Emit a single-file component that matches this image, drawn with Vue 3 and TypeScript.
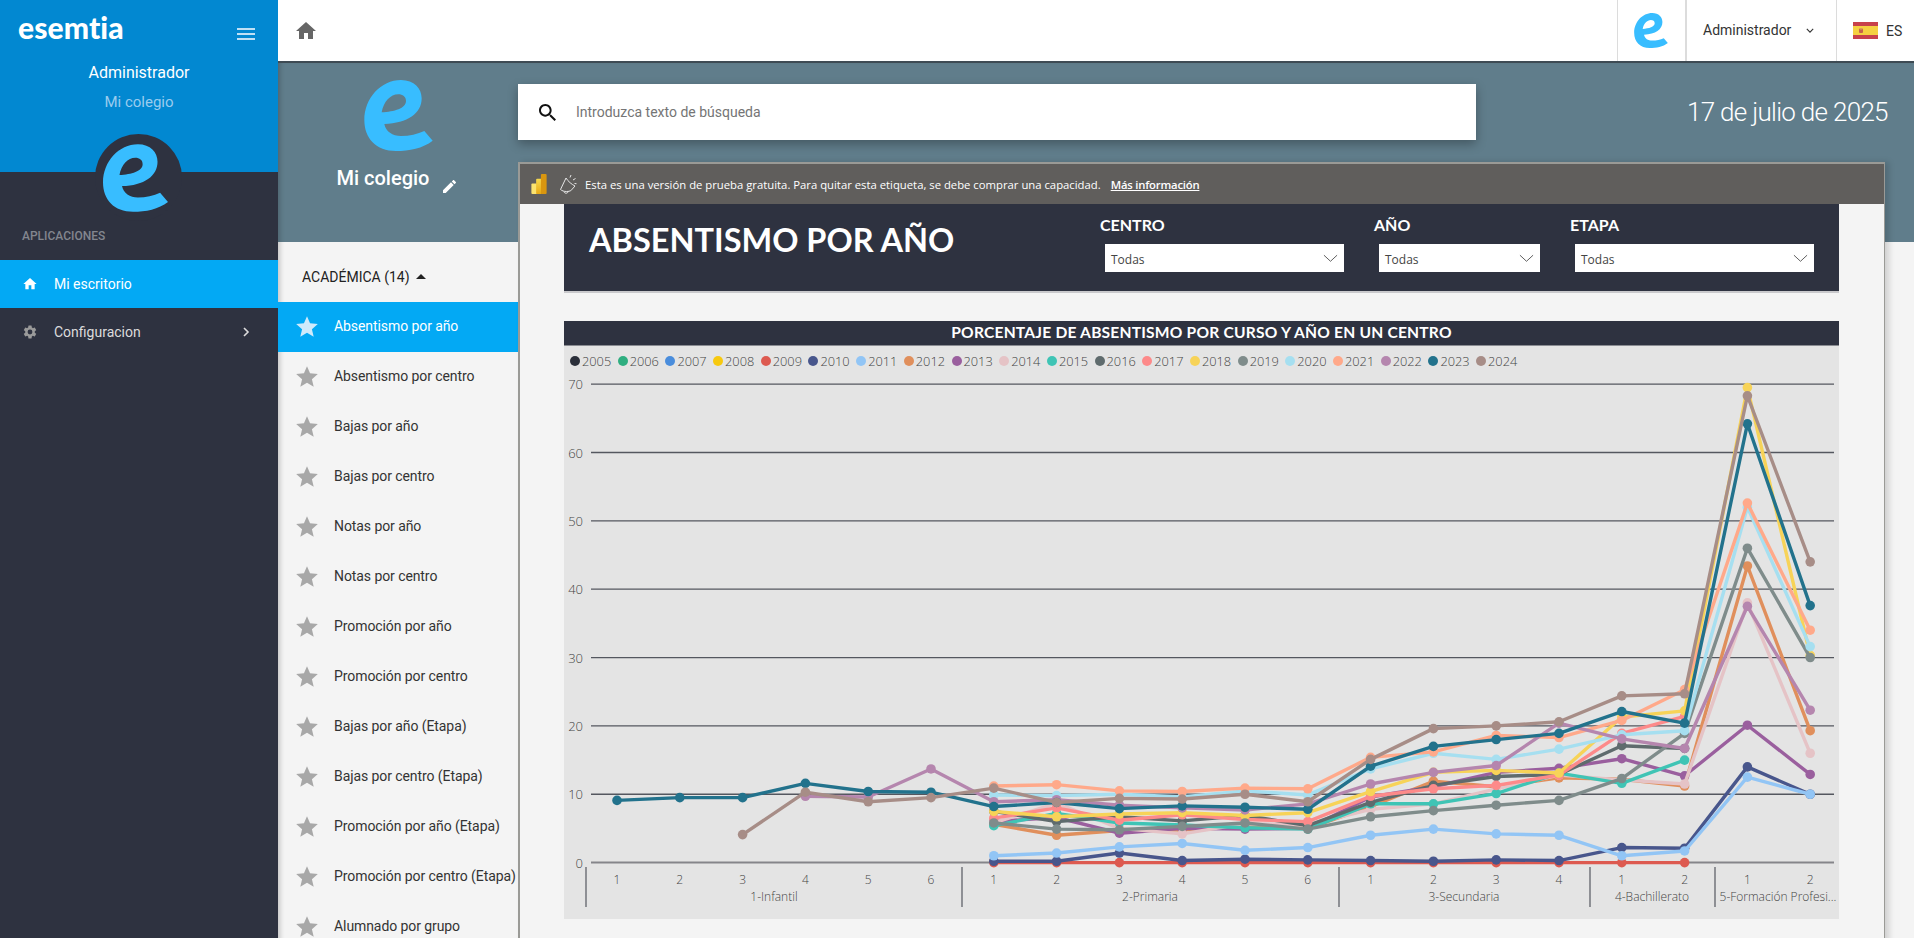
<script setup lang="ts">
const ePath = 'M245 212C215 235 175 243 135 243C75 243 40 205 40 150C40 85 90 30 150 30C190 30 212 55 212 85C212 130 170 160 100 162C104 185 125 198 150 198C175 198 200 192 220 183ZM92 127C130 125 165 115 165 93C165 80 155 73 142 73C118 73 98 95 92 127Z'
const starPath = 'M12 17.27L18.18 21l-1.64-7.03L22 9.24l-7.19-.61L12 2 9.19 8.63 2 9.24l5.46 4.73L5.82 21z'
const homePath = 'M10 20v-6h4v6h5v-8h3L12 3 2 12h3v8z'

const reports = ['Absentismo por año', 'Absentismo por centro', 'Bajas por año', 'Bajas por centro', 'Notas por año', 'Notas por centro', 'Promoción por año', 'Promoción por centro', 'Bajas por año (Etapa)', 'Bajas por centro (Etapa)', 'Promoción por año (Etapa)', 'Promoción por centro (Etapa)', 'Alumnado por grupo']

type V = number | null
const n = null
const series: { year: number; color: string; data: V[] }[] = [
  { year: 2005, color: '#2b2f3a', data: [] },
  { year: 2006, color: '#2fae80', data: [] },
  { year: 2007, color: '#4a8ddc', data: [] },
  { year: 2008, color: '#f7c90f', data: [] },
  { year: 2009, color: '#dd5a50', data: [n, n, n, n, n, n, 0, 0, 0, 0, 0, 0, 0, 0, 0, 0, 0, 0, n, n] },
  { year: 2010, color: '#48568c', data: [n, n, n, n, n, n, 0.2, 0.2, 1.4, 0.3, 0.5, 0.4, 0.3, 0.2, 0.4, 0.3, 2.2, 2.1, 14, 10] },
  { year: 2011, color: '#92c5f5', data: [n, n, n, n, n, n, 1, 1.4, 2.3, 2.8, 1.8, 2.2, 4, 4.9, 4.2, 4, 1, 1.7, 12.5, 10] },
  { year: 2012, color: '#e08f5c', data: [n, n, n, n, n, n, 5.6, 4, 4.7, 4.8, 5.2, 5, 8.2, 11.9, 11.1, 12.4, 12.2, 11.2, 43.4, 19.3] },
  { year: 2013, color: '#9a5f9e', data: [n, n, n, n, n, n, 6, 6.6, 4.3, 5, 4.9, 5, 9.6, 11.1, 13.2, 13.8, 15.2, 12.7, 20.1, 12.9] },
  { year: 2014, color: '#e5c3c6', data: [n, n, n, n, n, n, 5.8, 8.7, 5, 4.2, 5.7, 5.5, 7.8, 8.6, 10.8, 12.8, 12.1, 11.5, 38, 16] },
  { year: 2015, color: '#3fc4b5', data: [n, n, n, n, n, n, 5.4, 7.2, 5.8, 5.5, 5.1, 4.9, 8.6, 8.6, 10.1, 13.1, 11.6, 15, n, n] },
  { year: 2016, color: '#5f6b6d', data: [n, n, n, n, n, n, 7.5, 6, 6.7, 6.1, 6.9, 5.4, 8.8, 11.3, 12.6, 12.9, 17.1, 16.7, n, n] },
  { year: 2017, color: '#fd8a8a', data: [n, n, n, n, n, n, 6.5, 8, 6.2, 7, 6.3, 6, 9.7, 10.8, 11.3, 12.8, 18.9, 21.4, n, n] },
  { year: 2018, color: '#f7d358', data: [n, n, n, n, n, n, 7.5, 6.7, 7.1, 7.3, 6.9, 7.3, 10.4, 13.2, 13.5, 13.1, 21.3, 22.2, 69.5, 30.3] },
  { year: 2019, color: '#7f8c8b', data: [n, n, n, n, n, n, 5.8, 4.9, 4.8, 5.3, 5.8, 4.9, 6.7, 7.6, 8.4, 9.1, 12.3, 18.9, 46, 30] },
  { year: 2020, color: '#a6dff0', data: [n, n, n, n, n, n, 9.9, 9.8, 10, 9.6, 10.5, 9.9, 13.7, 16, 15.1, 16.6, 18.7, 19.3, 52, 31.6] },
  { year: 2021, color: '#ffa98a', data: [n, n, n, n, n, n, 11.2, 11.4, 10.5, 10.4, 10.9, 10.8, 15.4, 16.2, 18.6, 18.3, 20.8, 25.3, 52.6, 34] },
  { year: 2022, color: '#b586ae', data: [n, n, n, 9.7, 9.6, 13.7, 8.9, 9.2, 8.4, 8, 7.7, 8.6, 11.5, 13.2, 14.2, 20.4, 18.1, 16.7, 37.5, 22.3] },
  { year: 2023, color: '#22728c', data: [9.1, 9.5, 9.5, 11.6, 10.4, 10.3, 8.2, 8.8, 7.9, 8.3, 8.1, 7.8, 14.1, 17, 18, 18.9, 22.1, 20.4, 64.2, 37.6] },
  { year: 2024, color: '#a78d87', data: [n, n, 4.1, 10.3, 8.9, 9.5, 10.9, 8.8, 9.4, 9.3, 10, 8.9, 15.1, 19.6, 20, 20.6, 24.4, 24.7, 68.3, 44] },
]

const px = (i: number) => 617 + 62.8 * i
const py = (v: number) => 862.6 - 6.835 * v

const lines = series.map((s) => {
  const pts = s.data
    .map((v, i) => (v === null ? null : { x: px(i), y: py(v) }))
    .filter((p): p is { x: number; y: number } => p !== null)
  return { year: s.year, color: s.color, pts, points: pts.map((p) => `${p.x},${p.y}`).join(' ') }
})

const ticks = [0, 10, 20, 30, 40, 50, 60, 70]
const courses = ['1', '2', '3', '4', '5', '6', '1', '2', '3', '4', '5', '6', '1', '2', '3', '4', '1', '2', '1', '2']
const separators = [586, 962, 1339, 1590, 1715]
const stages = [
  { label: '1-Infantil', x: 774 },
  { label: '2-Primaria', x: 1150 },
  { label: '3-Secundaria', x: 1464 },
  { label: '4-Bachillerato', x: 1652 },
  { label: '5-Formación Profesi...', x: 1778 },
]
const filters = [
  { label: 'CENTRO', cls: 'wide' },
  { label: 'AÑO', cls: 'narrow' },
  { label: 'ETAPA', cls: 'wide' },
]
</script>

<template>
  <div class="app">
    <aside class="sidebar">
      <div class="side-head">
        <div class="brand-row">
          <span class="brand">esemtia</span>
          <span class="burger"><i></i><i></i><i></i></span>
        </div>
        <div class="side-user">Administrador</div>
        <div class="side-school">Mi colegio</div>
        <div class="avatar">
          <svg class="avatar-e" viewBox="40 30 205 213"><path :d="ePath" fill-rule="evenodd" /></svg>
        </div>
      </div>
      <div class="side-label">APLICACIONES</div>
      <a class="side-item active">
        <svg class="side-icon" viewBox="0 0 24 24"><path :d="homePath" /></svg>
        <span>Mi escritorio</span>
      </a>
      <a class="side-item">
        <svg class="side-icon gear" viewBox="0 0 24 24"><path d="M19.14 12.94c.04-.3.06-.61.06-.94s-.02-.64-.07-.94l2.03-1.58a.49.49 0 0 0 .12-.61l-1.92-3.32a.49.49 0 0 0-.59-.22l-2.39.96a7 7 0 0 0-1.62-.94l-.36-2.54a.48.48 0 0 0-.48-.41h-3.84a.48.48 0 0 0-.47.41l-.36 2.54c-.59.24-1.13.57-1.62.94l-2.39-.96a.48.48 0 0 0-.59.22L2.74 8.87a.48.48 0 0 0 .12.61l2.03 1.58c-.05.3-.09.63-.09.94s.02.64.07.94l-2.03 1.58a.49.49 0 0 0-.12.61l1.92 3.32c.12.22.37.29.59.22l2.39-.96c.5.38 1.03.7 1.62.94l.36 2.54c.05.24.24.41.48.41h3.84c.24 0 .44-.17.47-.41l.36-2.54c.59-.24 1.13-.56 1.62-.94l2.39.96c.22.08.47 0 .59-.22l1.92-3.32a.48.48 0 0 0-.12-.61l-2.01-1.58zM12 15.6A3.6 3.6 0 1 1 12 8.4a3.6 3.6 0 0 1 0 7.2z" /></svg>
        <span>Configuracion</span>
        <svg class="side-chevron" viewBox="0 0 10 12"><path d="M3 2l4 4-4 4" /></svg>
      </a>
    </aside>

    <main class="main">
      <header class="topbar">
        <svg class="top-home" viewBox="2 3 20 17"><path :d="homePath" /></svg>
        <div class="top-right">
          <div class="top-cell logo-cell">
            <svg class="top-e" viewBox="40 30 205 213"><path :d="ePath" fill-rule="evenodd" /></svg>
          </div>
          <div class="top-cell user-cell">
            <span>Administrador</span>
            <svg class="user-chevron" viewBox="0 0 10 6"><path d="M1 1l4 4 4-4" /></svg>
          </div>
          <div class="top-cell lang-cell">
            <svg class="flag" viewBox="0 0 25 17">
              <rect width="25" height="17" fill="#c8414b" />
              <rect y="4" width="25" height="9" fill="#f5d041" />
              <rect x="6" y="6.5" width="4" height="4.5" rx="1" fill="#c8614b" />
              <rect x="7" y="6" width="2" height="1.6" fill="#d9a05a" />
            </svg>
            <span>ES</span>
          </div>
        </div>
      </header>

      <div class="body">
        <section class="left">
          <div class="school">
            <svg class="school-e" viewBox="40 30 205 213"><path :d="ePath" fill-rule="evenodd" /></svg>
            <div class="school-name">
              <span>Mi colegio</span>
              <svg class="pencil" viewBox="3 3 18 18"><path d="M3 17.25V21h3.75L17.81 9.94l-3.75-3.75L3 17.25zM20.71 7.04c.39-.39.39-1.02 0-1.41l-2.34-2.34c-.39-.39-1.02-.39-1.41 0l-1.83 1.83 3.75 3.75 1.83-1.83z" /></svg>
            </div>
          </div>
          <div class="group-title">
            <span>ACADÉMICA (14)</span>
            <i class="caret"></i>
          </div>
          <ul class="report-list">
            <li v-for="(r, i) in reports" :key="r" class="report-item" :class="{ current: i === 0 }">
              <svg class="star" viewBox="0 0 24 24"><path :d="starPath" /></svg>
              <span>{{ r }}</span>
            </li>
          </ul>
        </section>

        <section class="right">
          <div class="search-row">
            <div class="search">
              <svg class="search-icon" viewBox="3 3 17.5 17.5"><path d="M15.5 14h-.79l-.28-.27C15.41 12.59 16 11.11 16 9.5 16 5.91 13.09 3 9.5 3S3 5.91 3 9.5 5.91 16 9.5 16c1.61 0 3.09-.59 4.23-1.57l.27.28v.79l5 4.99L20.49 19l-4.99-5zm-6 0C7.01 14 5 11.99 5 9.5S7.01 5 9.5 5 14 7.01 14 9.5 11.99 14 9.5 14z" /></svg>
              <span>Introduzca texto de búsqueda</span>
            </div>
            <div class="date">17 de julio de 2025</div>
          </div>

          <div class="report">
            <div class="trial">
              <svg class="pbi" viewBox="0 0 16 21">
                <defs>
                  <linearGradient id="pb1" x1="0" y1="0" x2="0" y2="1"><stop offset="0" stop-color="#f6d94f" /><stop offset="1" stop-color="#e8a915" /></linearGradient>
                </defs>
                <rect x="0" y="10" width="6" height="11" rx="1" fill="#fbe36f" />
                <rect x="5" y="5" width="6" height="16" rx="1" fill="url(#pb1)" />
                <rect x="10" y="0" width="6" height="21" rx="1" fill="#d9960f" />
              </svg>
              <svg class="bell" viewBox="0 0 18 20" fill="none" stroke="#e6e6e6" stroke-width="1">
                <path d="M7 4L1.5 15.5c1.5 1.3 3.5 2 6 2 1.6 0 3.2-.3 4.3-.8L16 12C13 10.5 9 7.5 7 4z" />
                <path d="M5 17.5c0 1.5 2 2 3 1.5 1-.4 1.4-1.5 1-2" />
                <path d="M11 3.5l1-2.5M14 6l2.5-1.5M15.5 9.5l2 .2" />
              </svg>
              <span class="trial-text">Esta es una versión de prueba gratuita. Para quitar esta etiqueta, se debe comprar una capacidad.</span>
              <a class="trial-link">Más información</a>
            </div>
            <div class="canvas">
              <div class="page-head">
                <h1>ABSENTISMO POR AÑO</h1>
                <div class="filters">
                  <div v-for="f in filters" :key="f.label" class="filter" :class="f.cls">
                    <label>{{ f.label }}</label>
                    <div class="select">
                      <span>Todas</span>
                      <svg viewBox="0 0 16 8"><path d="M1 1l7 6.5L15 1" /></svg>
                    </div>
                  </div>
                </div>
              </div>
              <div class="chart-title">PORCENTAJE DE ABSENTISMO POR CURSO Y AÑO EN UN CENTRO</div>
              <div class="chart">
                <div class="legend">
                  <div v-for="s in series" :key="s.year" class="legend-item">
                    <i :style="{ background: s.color }"></i>
                    <span>{{ s.year }}</span>
                  </div>
                </div>
                <svg class="plot" viewBox="564 376 1275 542">
                  <g v-for="t in ticks" :key="t">
                    <line x1="591" x2="1834" :y1="py(t)" :y2="py(t)" :class="t === 0 ? 'axis' : 'grid'" />
                    <text x="583" :y="py(t) + 5" class="tick" text-anchor="end">{{ t }}</text>
                  </g>
                  <g v-for="l in lines" :key="l.year">
                    <polyline :points="l.points" fill="none" :stroke="l.color" stroke-width="3.4" stroke-linejoin="round" />
                    <circle v-for="(p, i) in l.pts" :key="i" :cx="p.x" :cy="p.y" r="4.8" :fill="l.color" />
                  </g>
                  <line v-for="x in separators" :key="x" :x1="x" :x2="x" y1="867" y2="907" class="sep" />
                  <text v-for="(c, i) in courses" :key="i" :x="px(i)" y="884" class="tick small" text-anchor="middle">{{ c }}</text>
                  <text v-for="s in stages" :key="s.label" :x="s.x" y="901" class="tick small" text-anchor="middle">{{ s.label }}</text>
                </svg>
              </div>
            </div>
          </div>
        </section>
      </div>
    </main>
  </div>
</template>

<style>
html, body { margin: 0; padding: 0; background: #f4f4f4; overflow: hidden; }
</style>

<style scoped>
.app { display: grid; grid-template-columns: 278px 1fr; height: 938px; overflow: hidden; font-family: Roboto, sans-serif; color: #333; }

.sidebar { background: #2e3240; color: #dcdcdc; position: relative; z-index: 2; }
.side-head { height: 172px; background: #0288d1; position: relative; text-align: center; color: #fff; }
.brand-row { display: flex; justify-content: space-between; align-items: center; padding: 8px 23px 0 18px; height: 52px; box-sizing: border-box; }
.brand { font-family: Lato, sans-serif; font-weight: 900; font-size: 30px; letter-spacing: 0.1px; line-height: 1; margin-top: -7px; }
.burger { display: flex; flex-direction: column; gap: 3.5px; width: 18px; margin-top: 8px; }
.burger i { display: block; height: 1.6px; background: #bfe0f5; }
.side-user { font-size: 16px; line-height: 20px; margin-top: 11px; }
.side-school { font-size: 15px; line-height: 20px; margin-top: 9px; color: #9accee; }
.avatar { position: absolute; left: 95px; top: 134px; width: 87px; height: 87px; border-radius: 50%; background: #2e3240; }
.avatar-e { position: absolute; left: 8px; top: 9px; width: 65px; height: 70px; fill: #38bdff; }
.side-label { margin-top: 57px; padding-left: 22px; font-size: 12px; line-height: 14px; font-weight: 500; color: #83868f; height: 31px; }
.side-item { height: 48px; display: flex; align-items: center; padding-left: 22px; font-size: 14px; position: relative; }
.side-item.active { background: #03a9f4; color: #fff; }
.side-icon { width: 16px; height: 16px; fill: #fff; margin-right: 16px; }
.side-icon.gear { fill: #9a9a9a; }
.side-chevron { position: absolute; left: 241px; width: 10px; height: 12px; fill: none; stroke: #dcdcdc; stroke-width: 1.6; }

.main { display: flex; flex-direction: column; min-width: 0; }
.topbar { height: 63px; box-sizing: border-box; background: #fff; border-bottom: 2px solid #3e4b54; display: flex; align-items: center; justify-content: space-between; padding-left: 18px; flex: none; }
.top-home { width: 20px; height: 17px; fill: #666; }
.top-right { display: flex; height: 100%; }
.top-cell { display: flex; align-items: center; border-left: 1px solid #dcdcdc; height: 100%; box-sizing: border-box; }
.logo-cell { width: 68px; justify-content: center; padding-right: 2px; }
.top-e { width: 34px; height: 35px; fill: #38bdff; }
.user-cell { width: 151px; padding-left: 16px; font-size: 14px; color: #333; border-left-width: 2px; padding-bottom: 1px; }
.user-chevron { width: 8px; height: 5px; fill: none; stroke: #333; stroke-width: 1.4; margin-left: 15px; }
.lang-cell { width: 78px; padding-left: 16px; font-size: 14px; color: #333; }
.flag { width: 25px; height: 17px; margin-right: 8px; }

.body { flex: 1; display: flex; min-height: 0; background: linear-gradient(#607d8b 179px, #f4f4f4 179px); box-shadow: inset 5px 0 5px -3px rgba(0, 0, 0, 0.2); }
.left { width: 240px; flex: none; }
.school { height: 179px; box-sizing: border-box; padding-top: 17px; display: flex; flex-direction: column; align-items: center; position: relative; }
.school-e { width: 69px; height: 71px; fill: #38bdff; }
.school-name { display: flex; align-items: flex-end; color: #fff; font-size: 20px; font-weight: 500; line-height: 24px; margin-top: 15px; margin-left: -3px; }
.pencil { width: 13px; height: 13px; fill: #fff; margin-left: 14px; margin-bottom: -3px; }
.group-title { height: 60px; box-sizing: border-box; padding: 26px 0 0 24px; font-size: 14px; line-height: 18px; color: #222; display: flex; align-items: flex-start; }
.caret { width: 0; height: 0; border-left: 5px solid transparent; border-right: 5px solid transparent; border-bottom: 5px solid #222; margin: 6px 0 0 6px; }
.report-list { list-style: none; margin: 0; padding: 0; }
.report-item { height: 50px; display: flex; align-items: center; padding-left: 16px; font-size: 14px; color: #333; white-space: nowrap; letter-spacing: -0.08px; }
.report-item span { margin-top: -2px; }
.report-item.current { background: #03a9f4; color: #fff; }
.star { width: 26px; height: 26px; fill: #a8a8a8; margin-right: 14px; flex: none; }
.current .star { fill: #cfeafb; }

.right { flex: 1; min-width: 0; }
.search-row { height: 99px; box-sizing: border-box; padding-top: 21px; display: flex; align-items: flex-start; }
.search { width: 958px; height: 56px; box-sizing: border-box; background: #fff; display: flex; align-items: center; padding-left: 21px; box-shadow: 0 4px 10px rgba(0, 0, 0, 0.3); font-size: 14px; color: #757575; }
.search-icon { width: 17px; height: 17px; fill: #111; margin-right: 20px; }
.date { color: #fff; font-size: 26px; font-weight: 300; letter-spacing: -0.7px; line-height: 56px; margin-left: 211px; white-space: nowrap; }

.report { width: 1367px; height: 820px; box-sizing: border-box; border: 2px solid #9a9a96; border-bottom: 0; border-right-width: 1px; background: #f4f4f4; box-shadow: 4px 0 6px rgba(0, 0, 0, 0.15); }
.trial { height: 40px; background: #605e5c; display: flex; align-items: center; padding-left: 11px; color: #fff; font-family: "Open Sans", sans-serif; font-size: 11.3px; white-space: nowrap; }
.pbi { width: 16px; height: 20px; margin-right: 12px; }
.bell { width: 18px; height: 20px; margin-right: 8px; }
.trial-link { margin-left: 10px; text-decoration: underline; font-weight: 600; letter-spacing: -0.2px; }
.canvas { padding: 0 45px 0 44px; }
.page-head { height: 89px; box-sizing: border-box; background: #2e3240; border-bottom: 2px solid #c9c9cc; display: flex; align-items: flex-start; justify-content: space-between; padding: 12px 25px 0; color: #fff; font-family: "Open Sans", sans-serif; }
.page-head h1 { margin: 4px 0 0; font-family: Lato, sans-serif; font-size: 32.5px; line-height: 40px; font-weight: 700; white-space: nowrap; }
.filters { display: flex; gap: 29px; }
.filter label { display: block; font-family: Lato, sans-serif; font-size: 16px; line-height: 18px; font-weight: 700; padding-left: 1px; }
.filter.wide { width: 245px; }
.filter.narrow { width: 167px; }
.select { margin: 10px 0 0 6px; height: 28px; background: #fff; display: flex; align-items: center; justify-content: space-between; padding: 2px 6px 0 6px; box-sizing: border-box; color: #444; font-size: 12px; }
.select svg { width: 15px; height: 8px; fill: none; stroke: #555; stroke-width: 1; margin: -2px 0 0; }
.chart-title { margin-top: 28px; height: 25px; box-sizing: border-box; background: #2e3240; border-bottom: 1px solid #8a8c92; color: #fff; font-family: Lato, sans-serif; font-weight: 700; font-size: 15.6px; line-height: 23px; text-align: center; letter-spacing: 0.2px; white-space: nowrap; }
.chart { background: #e4e4e4; height: 573px; }
.legend { display: flex; height: 30px; padding-left: 6px; box-sizing: border-box; align-items: center; }
.legend-item { width: 47.7px; flex: none; display: flex; align-items: center; font-family: "Open Sans", sans-serif; font-size: 12.8px; font-weight: 300; color: #444; }
.legend-item i { width: 10px; height: 10px; border-radius: 50%; margin-right: 2px; flex: none; }
.plot { display: block; width: 1275px; height: 542px; }
.grid { stroke: #54575f; stroke-width: 1.3; }
.axis { stroke: #85858a; stroke-width: 2; }
.sep { stroke: #555860; stroke-width: 1.2; }
.tick { font-family: "Open Sans", sans-serif; font-size: 13px; font-weight: 300; fill: #444; }
.tick.small { font-size: 12px; }
</style>
